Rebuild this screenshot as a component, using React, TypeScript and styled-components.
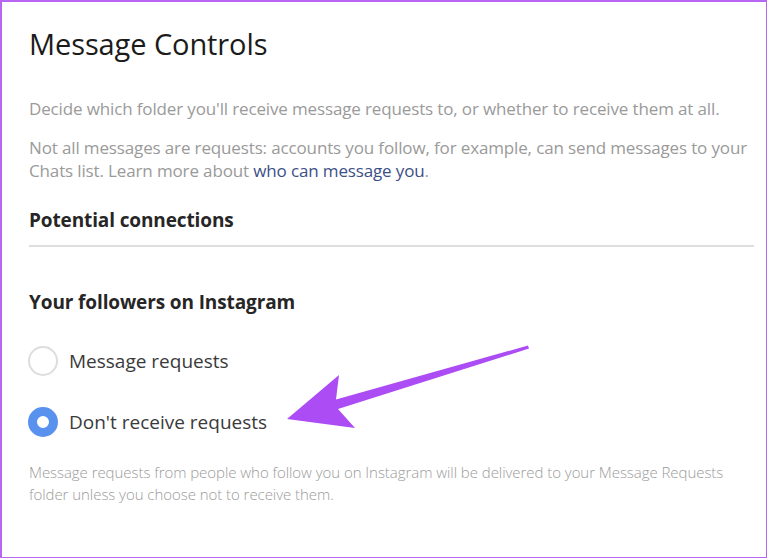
import styled, { createGlobalStyle } from 'styled-components';

const Global = createGlobalStyle`
  html, body {
    margin: 0;
    padding: 0;
    background: #ffffff;
  }
`;

const Frame = styled.div`
  position: relative;
  box-sizing: border-box;
  width: 767px;
  height: 558px;
  border: 2px solid #b866f2;
  border-right-width: 1px;
  border-bottom-width: 1px;
  background: #fff;
  padding: 24px 12px 0 27px;
  font-family: 'Open Sans', 'Noto Sans', sans-serif;
  overflow: hidden;
`;

const Title = styled.h1`
  margin: 0;
  font-size: 29px;
  font-weight: 400;
  color: #1b1b1b;
  letter-spacing: -0.1px;
  line-height: 36px;
`;

const Intro = styled.div`
  margin-top: 35px;
`;

const Note = styled.p`
  margin: 0;
  font-size: 17px;
  line-height: 23px;
  color: #9a9a9a;
  letter-spacing: -0.14px;
  & + & {
    margin-top: 16px;
  }
`;

const LinkText = styled.a`
  color: #3d4f86;
  text-decoration: none;
`;

const Section = styled.h2<{ $top: number }>`
  margin: ${p => p.$top}px 0 0;
  font-size: 19px;
  font-weight: 700;
  color: #262626;
  letter-spacing: -0.12px;
  line-height: 24px;
`;

const Divider = styled.hr`
  border: none;
  height: 2px;
  background: #dedede;
  margin: 13px 0 0;
`;

const Options = styled.div`
  display: flex;
  flex-direction: column;
  gap: 30px;
  margin-top: 31px;
`;

const Option = styled.label`
  display: flex;
  align-items: center;
  gap: 11px;
  font-size: 19px;
  color: #3a3a3a;
  letter-spacing: 0;
  height: 31px;
`;

const Radio = styled.span<{ $checked?: boolean }>`
  box-sizing: border-box;
  width: 30px;
  height: 30px;
  border-radius: 50%;
  flex-shrink: 0;
  margin-left: -1px;
  border: ${p => (p.$checked ? '9px solid #5891ee' : '2px solid #dddddd')};
  background: #fff;
`;

const Footer = styled.p`
  margin: 24px 0 0;
  font-size: 15px;
  line-height: 22px;
  color: #9b9b9b;
  font-weight: 300;
  letter-spacing: -0.05px;
`;

const Arrow = styled.svg`
  position: absolute;
  left: -2px;
  top: -2px;
  pointer-events: none;
`;

export default function App() {
  return (
    <>
      <Global />
      <Frame>
        <Title>Message Controls</Title>
        <Intro>
          <Note>Decide which folder you'll receive message requests to, or whether to receive them at all.</Note>
          <Note>
            Not all messages are requests: accounts you follow, for example, can send messages to your Chats list. Learn
            more about <LinkText href="#">who can message you</LinkText>.
          </Note>
        </Intro>
        <Section $top={26}>Potential connections</Section>
        <Divider />
        <Section $top={43}>Your followers on Instagram</Section>
        <Options>
          <Option>
            <Radio />
            Message requests
          </Option>
          <Option>
            <Radio $checked />
            Don't receive requests
          </Option>
        </Options>
        <Footer>
          Message requests from people who follow you on Instagram will be delivered to your Message Requests folder
          unless you choose not to receive them.
        </Footer>
        <Arrow width="768" height="559" viewBox="0 0 768 559">
          <path d="M528 345.5 L336 399.5 L339 375 L287 419 L355 428 L338 409 L529 348.5 Z" fill="#ac4cf5" />
        </Arrow>
      </Frame>
    </>
  );
}
